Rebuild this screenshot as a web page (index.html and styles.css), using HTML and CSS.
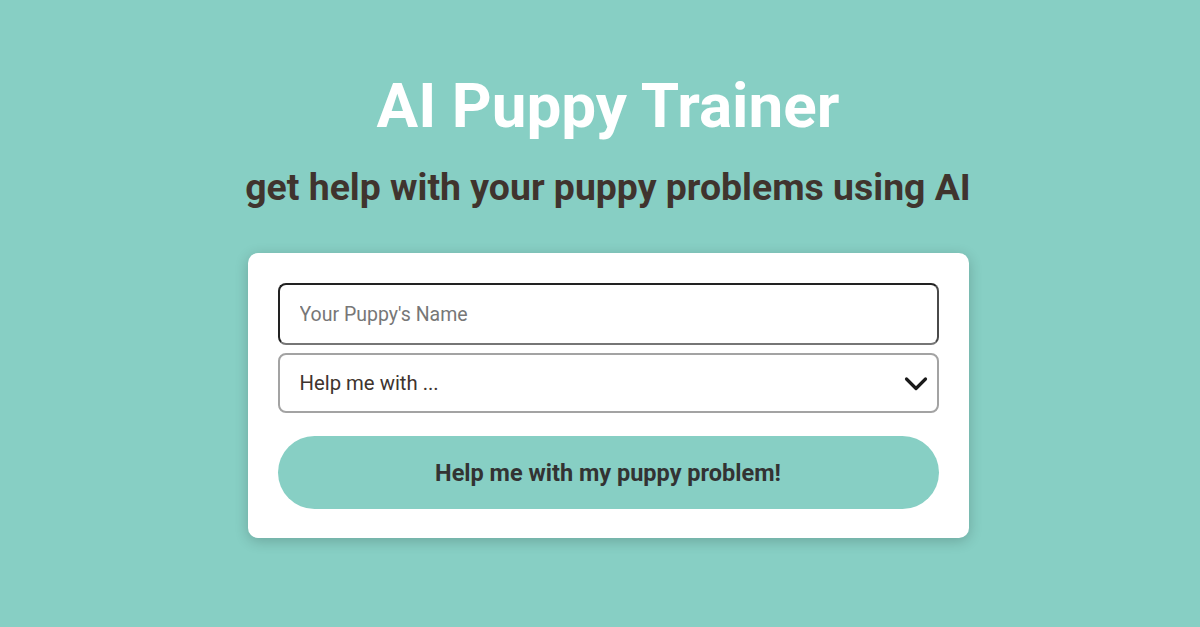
FILE: index.html
```html
<!DOCTYPE html>
<html lang="en">
<head>
<meta charset="utf-8">
<title>AI Puppy Trainer</title>
<link rel="stylesheet" href="styles.css">
</head>
<body>
<main class="page">
  <h1 class="title">AI Puppy Trainer</h1>
  <h2 class="subtitle">get help with your puppy problems using AI</h2>
  <form class="card">
    <input class="field name-field" type="text" placeholder="Your Puppy's Name">
    <div class="select-wrap">
      <select class="field select-field">
        <option>Help me with ...</option>
      </select>
      <svg class="chevron" width="24" height="16" viewBox="0 0 24 16" aria-hidden="true">
        <path d="M2.5 3 L12 12.5 L21.5 3" fill="none" stroke="#1a1a1a" stroke-width="3.2" stroke-linecap="round" stroke-linejoin="round"/>
      </svg>
    </div>
    <button class="submit" type="button">Help me with my puppy problem!</button>
  </form>
</main>
</body>
</html>
```
FILE: styles.css
```css
html, body {
  margin: 0;
  padding: 0;
  background: #87cfc4;
}
body {
  font-family: Roboto, "Liberation Sans", sans-serif;
  height: 627px;
  overflow: hidden;
}
.page {
  display: flex;
  flex-direction: column;
  align-items: center;
  padding: 75px 0 0 16px;
}
.title {
  margin: 0;
  font-size: 62px;
  line-height: 1;
  font-weight: 700;
  color: #ffffff;
}
.subtitle {
  margin: 32px 0 0;
  font-size: 37.4px;
  line-height: 1;
  font-weight: 700;
  color: #40342e;
}
.card {
  margin-top: 47px;
  width: 721px;
  box-sizing: border-box;
  padding: 30px 30px 29px;
  background: #ffffff;
  border-radius: 10px;
  box-shadow: 0 3px 14px rgba(0, 0, 0, 0.2);
  display: flex;
  flex-direction: column;
}
.field {
  box-sizing: border-box;
  width: 100%;
  margin: 0;
  font-family: Roboto, "Liberation Sans", sans-serif;
  font-size: 19.5px;
  background: #ffffff;
  border-radius: 8px;
  outline: none;
  padding: 0 20px;
}
.name-field {
  height: 62px;
  border: 2px solid;
  border-color: #222222 #4a4a4a #767676 #222222;
  color: #40342e;
}
.name-field::placeholder {
  color: #777777;
}
.select-wrap {
  position: relative;
  margin-top: 8px;
}
.select-field {
  height: 60px;
  border: 2px solid #a3a3a3;
  color: #40342e;
  appearance: none;
  -webkit-appearance: none;
  font-size: 20.3px;
}
.chevron {
  position: absolute;
  right: 11px;
  top: 23px;
  pointer-events: none;
}
.submit {
  margin-top: 23px;
  height: 73px;
  border: none;
  border-radius: 37px;
  background: #87cfc4;
  color: #333333;
  font-family: Roboto, "Liberation Sans", sans-serif;
  font-size: 23.5px;
  font-weight: 700;
  cursor: pointer;
}
```
